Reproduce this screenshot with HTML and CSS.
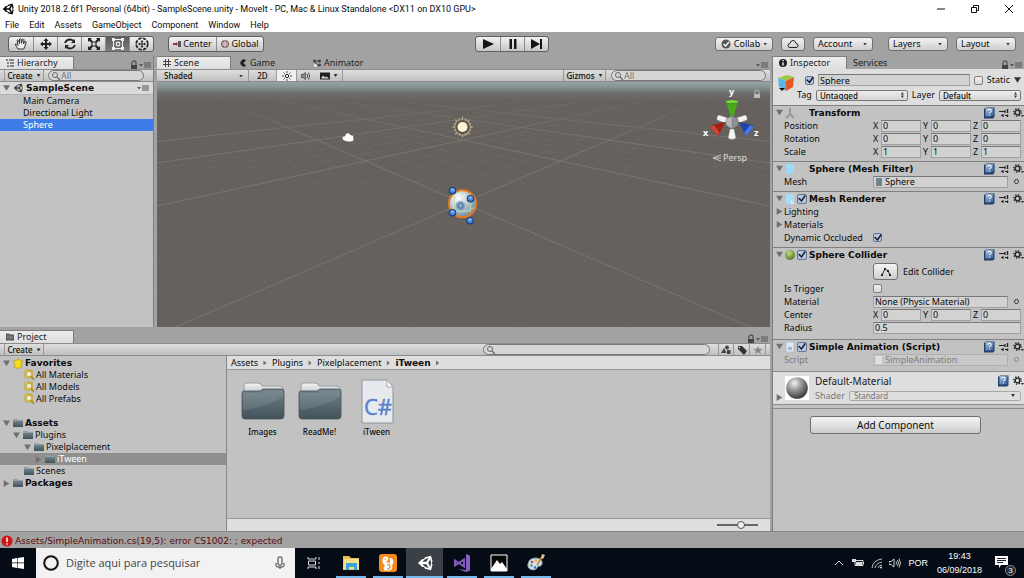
FILE: index.html
```html
<!DOCTYPE html>
<html lang="en">
<head>
<meta charset="utf-8">
<title>Unity 2018.2.6f1 Personal (64bit) - SampleScene.unity</title>
<link rel="stylesheet" href="styles.css">
</head>
<body>
<svg class="defs" aria-hidden="true">
  <defs>
    <linearGradient id="gFolder" x1="0" y1="0" x2="0" y2="1"><stop offset="0" stop-color="#71828a"/><stop offset="1" stop-color="#43525a"/></linearGradient>
    <linearGradient id="gTab" x1="0" y1="0" x2="0" y2="1"><stop offset="0" stop-color="#f4f4f4"/><stop offset="1" stop-color="#b4b8ba"/></linearGradient>
    <radialGradient id="gBall" cx=".38" cy=".28" r=".75"><stop offset="0" stop-color="#f5f5f5"/><stop offset=".35" stop-color="#a8a8a8"/><stop offset="1" stop-color="#333"/></radialGradient>
    <radialGradient id="gGreen" cx=".4" cy=".3" r=".8"><stop offset="0" stop-color="#c5dc85"/><stop offset="1" stop-color="#456d14"/></radialGradient>
    <linearGradient id="gHelp" x1="0" y1="0" x2="1" y2="1"><stop offset="0" stop-color="#a9c4e4"/><stop offset="1" stop-color="#31588f"/></linearGradient>
  </defs>
  <symbol id="unity" viewBox="0 0 24 24"><path fill-rule="evenodd" d="M21 1 12 3.500 10.700 5.900 8 5.900 1.500 12 8 18.100 10.700 18.100 12 20.500 21 23 23.300 14.500 22 12 23.300 9.500ZM11 7.200 17.500 4 14.200 10.300 8 10.300ZM8 13.700 14.200 13.700 17.500 20 11 16.800ZM16.800 12 20 6 21 12 20 18Z"/></symbol>
  <symbol id="lock" viewBox="0 0 8 10"><path d="M2 5V3a2 2 0 0 1 4 0v2" fill="none" stroke="#555" stroke-width="1.300"/><rect x="1" y="5" width="6" height="4" fill="#444"/></symbol>
  <symbol id="menu" viewBox="0 0 12 8"><path d="M0 3h4L2 5.500zM5 1.500h7v1H5zm0 2h7v1H5zm0 2h7v1H5z" fill="#555"/></symbol>
  <symbol id="lens" viewBox="0 0 10 10"><circle cx="4" cy="4" r="2.500" fill="none" stroke="#666"/><path d="M6 6l3 3" stroke="#666" stroke-width="1.300"/></symbol>
  <symbol id="folder" viewBox="0 0 12 10"><path d="M1 1h4l1 1h5v7H1z" fill="#8fa0a8"/><rect x="1" y="3" width="10" height="6" fill="url(#gFolder)"/></symbol>
  <symbol id="bigfolder" viewBox="0 0 44 38"><path d="M3 14V4q0-3 3-3h11q3 0 4 3h18q3 0 3 3v7z" fill="url(#gTab)" stroke="#8b9194" stroke-width=".8"/><path d="M1 11q0-2 2-2h16l3-2h18q3 0 3 2v25q0 3-3 3H4q-3 0-3-3z" fill="url(#gFolder)" stroke="#48545a" stroke-width=".8"/><path d="M2 11h18l3-2h19v5Q30 24 2 28z" fill="#fff" opacity=".09"/></symbol>
  <symbol id="help" viewBox="0 0 12 12"><path d="M1 2l2-1.500h8.500V10L10 11.500H1z" fill="#213f68"/><rect x="2.500" y="1" width="8" height="8.500" fill="url(#gHelp)"/><path d="M5 4q0-1.700 1.600-1.700T8.200 4q0 .8-1 1.200-.6.300-.6 1M6.600 7.500v1" fill="none" stroke="#fff" stroke-width="1.100"/></symbol>
  <symbol id="preset" viewBox="0 0 10 10"><path d="M0 3.500h6M6 2v3M2 7.500h2M4 6v3M6 7.500h3" stroke="#222" stroke-width="1.200" fill="none"/><path d="M8.500 1v4M8.500 6.500V9" stroke="#222" stroke-width="1.400"/></symbol>
  <symbol id="gear" viewBox="0 0 11 10"><circle cx="4.500" cy="4.500" r="2.300" fill="none" stroke="#222" stroke-width="1.300"/><circle cx="4.500" cy="4.500" r="3.600" fill="none" stroke="#222" stroke-width="1.400" stroke-dasharray="1.400 1.430"/><path d="M8 7h3L9.500 9z" fill="#222"/></symbol>
  <symbol id="query" viewBox="0 0 12 12"><path d="M2 1h7v8H2z" fill="#eee7b5" stroke="#bea63a"/><circle cx="6" cy="5" r="3" fill="#eeeacb" stroke="#c7a938" stroke-width="1.300"/><path d="M8 7l3 4" stroke="#ad8b20" stroke-width="1.600"/></symbol>
</svg>

<div class="app">
  <header class="titlebar">
    <svg class="i12"><use href="#unity"/></svg>
    <h1 class="title">Unity 2018.2.6f1 Personal (64bit) - SampleScene.unity - MoveIt - PC, Mac &amp; Linux Standalone &lt;DX11 on DX10 GPU&gt;</h1>
    <button class="win" aria-label="Minimize"><svg class="i12" viewBox="0 0 12 12"><path d="M2 6h8" stroke="#111"/></svg></button>
    <button class="win" aria-label="Restore"><svg class="i12" viewBox="0 0 12 12"><path d="M2.500 4.500h5v5h-5zM4.500 4V2.500h5v5H8" fill="none" stroke="#111"/></svg></button>
    <button class="win" aria-label="Close"><svg class="i12" viewBox="0 0 12 12"><path d="M2 2l8 8M10 2l-8 8" stroke="#111"/></svg></button>
  </header>
  <nav class="menubar">
    <button>File</button><button>Edit</button><button>Assets</button><button>GameObject</button><button>Component</button><button>Window</button><button>Help</button>
  </nav>

  <div class="toolbar">
    <div class="toolside">
      <div class="segment">
        <button class="seg" aria-label="Hand"><svg class="i14" viewBox="0 0 14 14"><path d="M4 12 1.500 8q-.5-1.500 1-1L4 8.500 3 3.500q.8-1.200 1.500 0l1 3L5.500 2q1-1.200 1.600 0l.4 4.300L8.500 2.500q1-1 1.500.2L9.500 7l1.300-2.500q1.200-.6 1.400.5L11 9l-1.200 3z" fill="#eee" stroke="#222" stroke-width=".9"/></svg></button>
        <button class="seg" aria-label="Move"><svg class="i14" viewBox="0 0 14 14"><path d="M7 1l2.500 3H8v2h2V4.500L13 7l-3 2.500V8H8v2h1.500L7 13 4.500 10H6V8H4v1.500L1 7l3-2.500V6h2V4H4.500z" fill="#222"/></svg></button>
        <button class="seg" aria-label="Rotate"><svg class="i14" viewBox="0 0 14 14"><path d="M2 6q1.500-3.500 5-3.500 2 0 3.500 1.500M12 8q-1.500 3.500-5 3.500-2 0-3.500-1.500" fill="none" stroke="#222" stroke-width="1.800"/><path d="M12 2v4H8zM2 12V8h4z" fill="#222"/></svg></button>
        <button class="seg" aria-label="Scale"><svg class="i14" viewBox="0 0 14 14"><path d="M5 5h4v4H5z" fill="none" stroke="#222" stroke-width="1.200"/><path d="M1 1h4L3.800 2.200l2 2-1.600 1.600-2-2L1 5zM13 1v4l-1.200-1.200-2 2-1.600-1.600 2-2L9 1zM1 13V9l1.200 1.200 2-2 1.600 1.600-2 2L5 13zM13 13H9l1.200-1.200-2-2 1.600-1.600 2 2L13 9z" fill="#222"/></svg></button>
        <button class="seg on" aria-label="Rect" aria-pressed="true"><svg class="i14" viewBox="0 0 14 14"><path d="M2.500 2.500h9v9h-9z" fill="none" stroke="#f4f4f4"/><circle cx="7" cy="7" r="1.800" fill="none" stroke="#f4f4f4" stroke-width="1.200"/><path d="M1 1h3v3H1zm9 0h3v3h-3zM1 10h3v3H1zm9 0h3v3h-3z" fill="#eee"/></svg></button>
        <button class="seg" aria-label="Transform"><svg class="i14" viewBox="0 0 14 14"><circle cx="7" cy="7" r="5.800" fill="none" stroke="#222" stroke-width="1.700" stroke-dasharray="3.400 1.150"/><path d="M7 3l1.500 2h-1v1.500H9v-1L11 7 9 8.500v-1H7.500V9h1L7 11 5.500 9h1V7.500H5v1L3 7l2-1.500v1h1.500V5h-1z" fill="#222"/></svg></button>
      </div>
      <div class="segment">
        <button class="seg word"><svg class="i8" viewBox="0 0 8 8"><path d="M0 3h3v2H0zm3-1l2 2-2 2z" fill="#934"/><path d="M5 1h3v6H5z" fill="#555"/></svg>Center</button>
        <button class="seg word"><svg class="i8" viewBox="0 0 8 8"><circle cx="4" cy="4" r="3.500" fill="#b08a8d" stroke="#644"/><path d="M1 3h6M4 0v8M1 5h6" stroke="#ddd" stroke-width=".7"/></svg>Global</button>
      </div>
    </div>
    <div class="segment">
      <button class="seg" aria-label="Play"><svg class="i14" viewBox="0 0 14 14"><path d="M2 2l11 5-11 5z" fill="#151515"/></svg></button>
      <button class="seg" aria-label="Pause"><svg class="i14" viewBox="0 0 14 14"><path d="M3.500 2h2.500v10H3.500zm4.500 0h2.500v10H8z" fill="#151515"/></svg></button>
      <button class="seg" aria-label="Step"><svg class="i14" viewBox="0 0 14 14"><path d="M1 2l9 5-9 5zM10 2h2v10h-2z" fill="#151515"/></svg></button>
    </div>
    <div class="toolside end">
      <button class="tbtn collab"><svg class="i10" viewBox="0 0 10 10"><circle cx="5" cy="5" r="4.500" fill="#555"/><path d="M2.500 5l2 2 3.500-4" fill="none" stroke="#fff" stroke-width="1.400"/></svg>Collab<i class="down"></i></button>
      <button class="tbtn cloud" aria-label="Services"><svg class="i12" viewBox="0 0 12 12"><path d="M3 9.500q-2 0-2-2t2-2q.3-3 3-3t3 3q2 0 2 2t-2 2z" fill="none" stroke="#222"/></svg></button>
      <span class="pick tpick"><select aria-label="Account"><option>Account</option></select></span>
      <span class="pick tpick set"><select aria-label="Layers"><option>Layers</option></select></span>
      <span class="pick tpick"><select aria-label="Layout"><option>Layout</option></select></span>
    </div>
  </div>

  <main class="workspace">
    <div class="left">
      <div class="upper">
        <section class="panel hierarchy">
          <div class="tabs">
            <button class="tab on"><svg class="i8" viewBox="0 0 8 8"><path d="M0 1h2m1 0h5M1 4h2m1 0h4M1 7h2m1 0h4" stroke="#222"/></svg>Hierarchy</button>
            <span class="tabtools"><svg class="lk"><use href="#lock"/></svg><svg class="mn"><use href="#menu"/></svg></span>
          </div>
          <div class="bar">
            <button class="barbtn create">Create<i class="down"></i></button>
            <label class="search"><svg class="i10"><use href="#lens"/></svg><input type="search" placeholder="All" aria-label="Search hierarchy"></label>
          </div>
          <div class="scenerow"><i class="tri open"></i><svg class="i10 grey"><use href="#unity"/></svg><b>SampleScene</b><svg class="mn"><use href="#menu"/></svg></div>
          <ul class="objects"><li>Main Camera</li><li>Directional Light</li><li class="sel">Sphere</li></ul>
        </section>

        <section class="panel scene">
          <div class="tabs">
            <button class="tab on"><svg class="i8" viewBox="0 0 8 8"><path d="M2.500 0v8M5.500 0v8M0 2.500h8M0 5.500h8" stroke="#444"/></svg>Scene</button>
            <button class="tab"><svg class="i8" viewBox="0 0 8 8"><path d="M7 1.200A3.500 3.500 0 1 0 7 6.800L4.500 4z" fill="#222"/></svg>Game</button>
            <button class="tab"><svg class="i8" viewBox="0 0 8 8"><path d="M2 2h4M2 2l2 4M2 6h4" stroke="#444"/><circle cx="1.500" cy="2" r="1.500" fill="#444"/><circle cx="6.500" cy="2" r="1.500" fill="#444"/><circle cx="6.500" cy="6" r="1.500" fill="#444"/><circle cx="2.500" cy="6.500" r="1.400" fill="#eee"/></svg>Animator</button>
            <span class="tabtools"><svg class="mn"><use href="#menu"/></svg></span>
          </div>
          <div class="bar">
            <span class="pick shade"><select aria-label="Shading mode"><option>Shaded</option></select></span>
            <button class="barbtn two">2D</button>
            <button class="barbtn lit" aria-label="Lighting" aria-pressed="true"><svg class="i10" viewBox="0 0 10 10"><circle cx="5" cy="5" r="1.700" fill="none" stroke="#222"/><path d="M5 0v2M5 8v2M0 5h2M8 5h2M1.500 1.500l1.300 1.300M7.200 7.200l1.300 1.300M8.500 1.500L7.200 2.800M1.500 8.500l1.300-1.300" stroke="#222" stroke-width=".8"/></svg></button>
            <button class="barbtn ic" aria-label="Audio"><svg class="i10" viewBox="0 0 10 10"><path d="M0 3.500h2l2.500-2v7L2 6.500H0z" fill="#888" stroke="#444" stroke-width=".7"/><path d="M6 3q1.300 2 0 4M7.500 1.500q2.300 3.500 0 7" fill="none" stroke="#444" stroke-width=".9"/></svg></button>
            <button class="barbtn fx" aria-label="Effects"><svg class="i10" viewBox="0 0 10 10"><path d="M0 1.500h10v7H0z" fill="#222"/><path d="M1 7.500l2-3 2 2 1.500-1L9 7.500z" fill="#ddd"/></svg><i class="down"></i></button>
            <button class="barbtn gizmos">Gizmos<i class="down"></i></button>
            <label class="search"><svg class="i10"><use href="#lens"/></svg><input type="search" placeholder="All" aria-label="Search scene"></label>
          </div>
          <div class="view">
            <svg class="grid" viewBox="0 0 613 245" preserveAspectRatio="xMidYMid slice">
              <defs>
                <linearGradient id="sky" x1="0" y1="0" x2="0" y2="1"><stop offset="0" stop-color="#93a5a6"/><stop offset=".02" stop-color="#879394"/><stop offset=".045" stop-color="#6e6e6d"/><stop offset=".08" stop-color="#67615d" stop-opacity=".7"/><stop offset=".25" stop-color="#67615d" stop-opacity="0"/></linearGradient>
                <radialGradient id="orb" cx=".35" cy=".3" r=".8"><stop offset="0" stop-color="#fff"/><stop offset=".4" stop-color="#c8d3d6"/><stop offset="1" stop-color="#5d7d9b"/></radialGradient>
                <radialGradient id="knob" cx=".5" cy=".3" r=".7"><stop offset="0" stop-color="#8cc2ff"/><stop offset="1" stop-color="#1a55b8"/></radialGradient>
              </defs>
              <rect width="613" height="245" fill="#67615d"/>
              <g stroke="#807a75" stroke-width=".6" opacity=".35">
                <path d="M14-5-218 245M14-5-102 245M14-5 130 245M14-5 246 245M14-5 362 245M14-5 478 245M14-5 710 245M14-5 826 245M14-5 942 245M14-5 1058 245M14-5 1290 245M14-5 1406 245M14-5 1522 245M14-5 1638 245M14-5 1960 245M14-5 2700 245M14-5 3600 245"/>
                <path d="M598-5 830 245M598-5 714 245M598-5 482 245M598-5 366 245M598-5 250 245M598-5 134 245M598-5-98 245M598-5-214 245M598-5-330 245M598-5-446 245M598-5-678 245M598-5-794 245M598-5-910 245M598-5-1026 245M598-5-1348 245M598-5-2088 245M598-5-2988 245"/>
              </g>
              <path d="M14-5 594 245M14-5 1174 245M14-5 1754 245M14-5 2334 245M598-5 18 245M598-5-562 245M598-5-1142 245M598-5-1722 245" stroke="#99928a" stroke-width=".8" opacity=".5"/>
              <rect width="613" height="245" fill="url(#sky)"/>
              <path d="M186 58q-2-4 2-4 1-4 4-3l2 2q3-1 3 3v3q-5 2-9 0z" fill="#fff" stroke="#444" stroke-width=".6"/>
              <g transform="translate(305.500 45)"><circle r="8" fill="#5b564b" stroke="#a8a28b" stroke-width="1.800"/><path d="M0-13 1.500-7h-3zM0 13 1.500 7h-3zM13 0 7 1.500v-3zM-13 0-7 1.500v-3zM9-9 6-4 4-6zM-9-9-6-4-4-6zM9 9 6 4 4 6zM-9 9-6 4-4 6z" fill="#b9b39b" stroke="#4c483f" stroke-width=".5"/><circle r="5" fill="#fff2d2"/></g>
              <g transform="translate(305.500 121.500)"><circle r="13.500" fill="url(#orb)" stroke="#e87a1d" stroke-width="2"/><path d="M-8-12V8H8V-6M-10 4Q0 10 12 4M-6-11Q0-14 7-6" fill="none" stroke="#b8dcb4" stroke-width=".8"/><circle cx="-2" cy="2" r="5" fill="#7898b8" opacity=".7"/><circle cx="-2" cy="2" r="2.500" fill="none" stroke="#446fa5"/><g fill="url(#knob)" stroke="#153d7d"><circle cx="-10" cy="-13" r="3.300"/><circle cx="8" cy="-5" r="3.300"/><circle cx="-10" cy="9" r="3.300"/><circle cx="7.500" cy="17" r="3.300"/></g></g>
            </svg>
            <div class="compass">
              <svg viewBox="0 0 64 84" width="64" height="84">
                <g stroke="#555" stroke-width=".3"><path d="M20 29l9 3-3 5-8-3q-1-4 2-5zM46 29l-9 3 3 5 8-3q1-4-2-5z" fill="#f3f3f3"/><path d="M27 16h12l-5 17h-2z" fill="#47a81a"/><path d="M27 15q6-2 12 0v2H27z" fill="#7be23c"/><path d="M27 33l6-3 6 3v6l-6 4-6-4z" fill="#b4b8b8"/><path d="M33 30l6 3v6l-6 4z" fill="#8f9393"/><path d="M12 39l14-3-6 13z" fill="#a61e12"/><path d="M11 41l4-2 6 8-2 3z" fill="#d84230"/><path d="M54 39l-14-3 6 13z" fill="#1c44ae"/><path d="M55 41l-4-2-6 8 2 3z" fill="#4478f0"/><path d="M31 43h4l2 9q-4 3-8 0z" fill="#f4f4f4"/></g>
                <text x="30" y="9" class="axis">y</text><text x="4" y="50" class="axis">x</text><text x="55" y="50" class="axis">z</text>
                <path d="M22 69l-8 3 8 3M22 72h-7" fill="none" stroke="#ddd" stroke-width=".8"/><text x="24" y="75" class="persp">Persp</text>
              </svg>
              <svg class="vlock" viewBox="0 0 8 10"><path d="M2 5V3a2 2 0 0 1 4 0v2" fill="none" stroke="#bbb"/><path d="M1 5h6v4H1z" fill="#bbb"/></svg>
            </div>
          </div>
        </section>
      </div>

      <section class="panel project">
        <div class="tabs">
          <button class="tab on"><svg class="i8" viewBox="0 0 8 8"><path d="M0 1h3l1 1h4v5H0z" fill="#777" stroke="#333" stroke-width=".8"/></svg>Project</button>
          <span class="tabtools"><svg class="lk"><use href="#lock"/></svg><svg class="mn"><use href="#menu"/></svg></span>
        </div>
        <div class="bar">
          <button class="barbtn create">Create<i class="down"></i></button>
          <label class="search wide"><svg class="i10"><use href="#lens"/></svg><input type="search" aria-label="Search assets"></label>
          <button class="barbtn pic" aria-label="Search by type"><svg class="i10" viewBox="0 0 10 10"><circle cx="6" cy="2.500" r="2" fill="#444"/><path d="M0 8l3-5 2.500 5zM6 5h3.500v4H6z" fill="#444"/></svg></button>
          <button class="barbtn pic" aria-label="Search by label"><svg class="i10" viewBox="0 0 10 10"><path d="M1 1h4l5 5-3 4-6-6z" fill="#333"/><circle cx="2.500" cy="2.500" r=".8" fill="#ddd"/></svg></button>
          <button class="barbtn pic" aria-label="Save search"><svg class="i10" viewBox="0 0 10 10"><path d="M5 1l1.200 2.800L9.500 4 7 6l.8 3L5 7.300 2.200 9 3 6 .5 4l3.300-.2z" fill="#888"/></svg></button>
        </div>
        <div class="browser">
          <ul class="tree">
            <li><i class="tri open"></i><svg class="i12" viewBox="0 0 12 12"><path d="M6 1l1.500 2.500 3.500.5-2 3 .5 4h-7L3 7 1 4l3.500-.5z" fill="#f8dc20" stroke="#b89a1c" stroke-width=".7"/></svg><b>Favorites</b></li>
            <li class="d1"><svg class="i12"><use href="#query"/></svg>All Materials</li>
            <li class="d1"><svg class="i12"><use href="#query"/></svg>All Models</li>
            <li class="d1"><svg class="i12"><use href="#query"/></svg>All Prefabs</li>
            <li class="group"><i class="tri open"></i><svg class="i12"><use href="#folder"/></svg><b>Assets</b></li>
            <li class="d1"><i class="tri open"></i><svg class="i12"><use href="#folder"/></svg>Plugins</li>
            <li class="d2"><i class="tri open"></i><svg class="i12"><use href="#folder"/></svg>Pixelplacement</li>
            <li class="d3 sel"><i class="tri"></i><svg class="i12"><use href="#folder"/></svg>iTween</li>
            <li class="d1"><svg class="i12"><use href="#folder"/></svg>Scenes</li>
            <li><i class="tri"></i><svg class="i12"><use href="#folder"/></svg><b>Packages</b></li>
          </ul>
          <div class="files">
            <nav class="crumbs" aria-label="Path"><a href="#">Assets</a><i class="tri small"></i><a href="#">Plugins</a><i class="tri small"></i><a href="#">Pixelplacement</a><i class="tri small"></i><b>iTween</b><i class="tri small"></i></nav>
            <div class="assets">
              <figure><svg class="thumb" viewBox="0 0 44 46"><use href="#bigfolder" y="3" width="44" height="38"/></svg><figcaption>Images</figcaption></figure>
              <figure><svg class="thumb" viewBox="0 0 44 46"><use href="#bigfolder" y="3" width="44" height="38"/></svg><figcaption>ReadMe!</figcaption></figure>
              <figure><svg class="thumb" viewBox="0 0 44 46"><path d="M7 1h25l6 7v36H7z" fill="#e6eaee" stroke="#909498"/><path d="M32 1v7h6z" fill="#fff" stroke="#a5a9ad"/><text x="9" y="36" class="cs">C#</text></svg><figcaption>iTween</figcaption></figure>
            </div>
            <div class="zoombar"><input type="range" min="0" max="100" value="60" aria-label="Thumbnail size"></div>
          </div>
        </div>
      </section>
    </div>

    <section class="panel inspector">
      <div class="tabs">
        <button class="tab on"><svg class="i8" viewBox="0 0 8 8"><circle cx="4" cy="4" r="4" fill="#222"/><path d="M4 1v1.300M4 3.500v3" stroke="#fff" stroke-width="1.400"/></svg>Inspector</button>
        <button class="tab plain">Services</button>
        <span class="tabtools"><svg class="lk"><use href="#lock"/></svg><svg class="mn"><use href="#menu"/></svg></span>
      </div>
      <div class="objhead">
        <svg class="cube" viewBox="0 0 18 18"><path d="M1 4l9-3 7 2-8 4z" fill="#9cc848"/><path d="M1 4l8 3v10l-7-4z" fill="#5ab4e8"/><path d="M9 7l8-4-1 10-7 4z" fill="#e45a24"/><path d="M2 14h6l-3 3z" fill="#111"/></svg>
        <div class="objrows">
          <div class="line"><input class="ck" type="checkbox" checked aria-label="Active"><input class="field grow" value="Sphere" aria-label="Name"><label class="static"><input class="ck" type="checkbox">Static</label><i class="tri open dark"></i></div>
          <div class="line second"><label for="tag">Tag</label><span class="pick ud"><select id="tag"><option>Untagged</option></select></span><label for="layer">Layer</label><span class="pick ud narrow"><select id="layer"><option>Default</option></select></span></div>
        </div>
      </div>

      <section class="comp">
        <h2 class="head"><i class="tri open"></i><svg class="i12" viewBox="0 0 12 12"><path d="M6 1v6M6 7l-4 4M6 7l4 4" stroke="#999" stroke-width="2" fill="none"/></svg><span class="nock"></span><span class="name">Transform</span><svg class="i12"><use href="#help"/></svg><svg class="i10"><use href="#preset"/></svg><svg class="gr"><use href="#gear"/></svg></h2>
        <div class="row"><span>Position</span><div class="vec"><label>X<input class="field" value="0"></label><label>Y<input class="field" value="0"></label><label>Z<input class="field" value="0"></label></div></div>
        <div class="row"><span>Rotation</span><div class="vec"><label>X<input class="field" value="0"></label><label>Y<input class="field" value="0"></label><label>Z<input class="field" value="0"></label></div></div>
        <div class="row"><span>Scale</span><div class="vec"><label>X<input class="field" value="1"></label><label>Y<input class="field" value="1"></label><label>Z<input class="field" value="1"></label></div></div>
      </section>

      <section class="comp">
        <h2 class="head"><i class="tri open"></i><svg class="i12" viewBox="0 0 12 12"><rect x="2" y="1" width="8" height="10" fill="#9edaf5"/></svg><span class="nock"></span><span class="name">Sphere (Mesh Filter)</span><svg class="i12"><use href="#help"/></svg><svg class="i10"><use href="#preset"/></svg><svg class="gr"><use href="#gear"/></svg></h2>
        <div class="row"><label for="mesh">Mesh</label><div class="obj"><span class="field slot"><svg class="i8" viewBox="0 0 8 8"><path d="M1 0h6v8H1z" fill="#71858c"/></svg><input id="mesh" value="Sphere"></span><button class="dot" aria-label="Pick mesh"></button></div></div>
      </section>

      <section class="comp">
        <h2 class="head"><i class="tri open"></i><svg class="i12" viewBox="0 0 12 12"><rect x="2" y="1" width="8" height="10" fill="#a9dcf4"/><path d="M7 7l3 4H7z" fill="#eef"/></svg><input class="ck" type="checkbox" checked aria-label="Enable Mesh Renderer"><span class="name">Mesh Renderer</span><svg class="i12"><use href="#help"/></svg><svg class="i10"><use href="#preset"/></svg><svg class="gr"><use href="#gear"/></svg></h2>
        <div class="row fold"><i class="tri"></i><span>Lighting</span></div>
        <div class="row fold"><i class="tri"></i><span>Materials</span></div>
        <div class="row"><label for="occ">Dynamic Occluded</label><input id="occ" class="ck" type="checkbox" checked></div>
      </section>

      <section class="comp tall">
        <h2 class="head"><i class="tri open"></i><svg class="i12" viewBox="0 0 12 12"><circle cx="6" cy="6" r="5" fill="url(#gGreen)"/></svg><input class="ck" type="checkbox" checked aria-label="Enable Sphere Collider"><span class="name">Sphere Collider</span><svg class="i12"><use href="#help"/></svg><svg class="i10"><use href="#preset"/></svg><svg class="gr"><use href="#gear"/></svg></h2>
        <div class="row edit"><span></span><div class="editcell"><button id="edit" class="tbtn editbtn" aria-label="Edit Collider"><svg class="i12" viewBox="0 0 12 12"><path d="M2 9l3-6 3 2 2 4" fill="none" stroke="#222"/><path d="M1 8h2v2H1zm3-6h2v2H4zm3 2h2v2H7zm2 4h2v2H9z" fill="#222"/></svg></button><label for="edit">Edit Collider</label></div></div>
        <div class="row"><label for="trig">Is Trigger</label><input id="trig" class="ck" type="checkbox"></div>
        <div class="row"><label for="mat">Material</label><div class="obj"><input id="mat" class="field" value="None (Physic Material)"><button class="dot" aria-label="Pick material"></button></div></div>
        <div class="row"><span>Center</span><div class="vec"><label>X<input class="field" value="0"></label><label>Y<input class="field" value="0"></label><label>Z<input class="field" value="0"></label></div></div>
        <div class="row"><label for="rad">Radius</label><input id="rad" class="field" value="0.5"></div>
      </section>

      <section class="comp tall">
        <h2 class="head"><i class="tri open"></i><svg class="i12" viewBox="0 0 12 12"><rect x="2" y="1" width="8" height="10" fill="#dde6ec" stroke="#aab4bb" stroke-width=".6"/><path d="M4 6h4v3H4z" fill="#9db8d0"/></svg><input class="ck" type="checkbox" checked aria-label="Enable Simple Animation"><span class="name">Simple Animation (Script)</span><svg class="i12"><use href="#help"/></svg><svg class="i10"><use href="#preset"/></svg><svg class="gr"><use href="#gear"/></svg></h2>
        <div class="row off"><label for="scr">Script</label><div class="obj"><span class="field slot"><svg class="i8" viewBox="0 0 8 8"><path d="M1 0h6v8H1z" fill="#dce0e3"/></svg><input id="scr" value="SimpleAnimation" disabled></span><button class="dot" aria-label="Pick script" disabled></button></div></div>
      </section>

      <section class="material">
        <i class="tri"></i>
        <svg class="ball" viewBox="0 0 24 24"><rect width="24" height="24" fill="#fff"/><circle cx="12" cy="12" r="10.800" fill="url(#gBall)"/></svg>
        <div class="matbody">
          <div class="matname"><span>Default-Material</span><svg class="i12"><use href="#help"/></svg><svg class="gr"><use href="#gear"/></svg></div>
          <div class="line"><label for="shader">Shader</label><span class="pick faint"><select id="shader" disabled><option>Standard</option></select></span></div>
        </div>
      </section>
      <div class="addwrap"><button class="tbtn add">Add Component</button></div>
    </section>
  </main>

  <footer class="status"><svg class="i12" viewBox="0 0 12 12"><circle cx="6" cy="6" r="5.600" fill="#cf1515"/><path d="M6 2.500v4.500M6 8.200v1.500" stroke="#fff" stroke-width="1.500"/></svg><span>Assets/SimpleAnimation.cs(19,5): error CS1002: ; expected</span></footer>

  <div class="taskbar">
    <button class="start" aria-label="Start"><svg class="i14" viewBox="0 0 14 14"><path d="M1 3l5-1v4.600H1zM6.600 1.900 13 1v5.600H6.600zM1 7.300h5V12l-5-1zM6.600 7.300H13V13l-6.400-.9z" fill="#fff"/></svg></button>
    <label class="cortana"><svg class="i18" viewBox="0 0 18 18"><circle cx="9" cy="9" r="6.800" fill="none" stroke="#111" stroke-width="2"/></svg><input type="text" placeholder="Digite aqui para pesquisar" aria-label="Pesquisar"><svg class="i14" viewBox="0 0 14 14"><rect x="5" y="1" width="4" height="8" rx="1" fill="none" stroke="#333"/><path d="M3 7v2.500q0 1.500 2 1.500h4q2 0 2-1.500V7M7 11v2" fill="none" stroke="#333"/></svg></label>
    <button class="task" aria-label="Task view"><svg class="i14" viewBox="0 0 14 14"><path d="M1 1v2h8V1M1 13v-2h8v2M1.500 5h7v4h-7zM12 1v3M12 6v2M12 10v3" fill="none" stroke="#ddd"/></svg></button>
    <button class="task run" aria-label="Explorer"><svg class="i18" viewBox="0 0 18 18"><path d="M1 2h6l2 2h8v12H1z" fill="#e8bf50"/><path d="M2 5h15v10H1z" fill="#f8df8c"/><path d="M4 9h11v7h-3v-3H7v3H4z" fill="#39a5dc"/></svg></button>
    <button class="task run" aria-label="Browser"><svg class="i18" viewBox="0 0 18 18"><rect width="18" height="18" rx="3" fill="#f38a1c"/><path d="M3.500 5.500Q4 2 7.500 2.500q2.500 1 1.500 3.500Q8 8 6.500 8q2.500 0 4 1.500 1-2.500 0-5.500 4 0 4 4-.5 2.500-1.500 3.500 1.500 4-3 5H5.500Q3.500 14 6 11.500 3 9 3.500 5.500z" fill="#fff"/><path d="M8 11q3-1 3 1.500T8 15" stroke="#f38a1c" stroke-width="1.200" fill="none"/><circle cx="6.300" cy="5" r=".8" fill="#f38a1c"/></svg></button>
    <button class="task run cur" aria-label="Unity"><svg class="i16 white"><use href="#unity"/></svg></button>
    <button class="task run" aria-label="Visual Studio"><svg class="i18" viewBox="0 0 18 18"><path d="M13 0l4 1.500v15L13 18l-8-3 8 1z" fill="#865fc5"/><path d="M2 6.500l9 6V5.500l-9 6z" fill="none" stroke="#865fc5" stroke-width="1.900"/></svg></button>
    <button class="task run" aria-label="Photos"><svg class="i18" viewBox="0 0 18 18"><path d="M1 1h16v16H1z" fill="#080808" stroke="#fff"/><path d="M1 15l6-9 3 4 2-2 5 7v2H1z" fill="#fff"/></svg></button>
    <button class="task run" aria-label="Paint"><svg class="i18" viewBox="0 0 18 18"><path d="M1 10q1-6 8-6 7 1 6 6-1 3-4 2-1 4-5 4-6-1-5-6z" fill="#cde3ef" stroke="#8ba7b8"/><circle cx="5" cy="8" r="1.300" fill="#c43"/><circle cx="9" cy="6.500" r="1.300" fill="#e8b020"/><circle cx="4.500" cy="11.500" r="1.300" fill="#58a735"/><circle cx="8" cy="13.500" r="1.200" fill="#36c"/><path d="M10 11l5-8" stroke="#cf8735" stroke-width="1.800"/><path d="M14 4l1-4 3 1-2 4z" fill="#e6c58b"/></svg></button>
    <div class="tray">
      <svg class="i12" viewBox="0 0 12 12"><path d="M2 8l4-4 4 4" fill="none" stroke="#ddd"/></svg>
      <svg class="i14" viewBox="0 0 14 14"><path d="M4 4.500h8v5H4zM12.500 6v2" fill="none" stroke="#ddd"/><path d="M5 6h6v3H5zM1 3h4v3H1z" fill="#ddd"/></svg>
      <svg class="i12" viewBox="0 0 12 12"><path d="M1 11Q2 3 11 2M4 11q1-5 7-6M7 11q1-3 4-3" fill="none" stroke="#bbb"/><circle cx="10" cy="10.500" r="1" fill="#ddd"/></svg>
      <svg class="i12" viewBox="0 0 12 12"><path d="M0 4.500h2l3-2.500v8L2 7.500H0zM7 4.500q1 1.500 0 3M8.500 3q2 3 0 6M10 1.500q3 4.500 0 9" fill="none" stroke="#ddd" stroke-width=".9"/></svg>
      <span class="lang">POR</span>
      <div class="clock"><time>19:43</time><time>06/09/2018</time></div>
      <button class="notes" aria-label="3 notifications"><svg class="i18" viewBox="0 0 18 18"><path d="M1 2h13v9H7l-2 3v-3H1z" fill="#fff"/><path d="M3 4.500h9M3 6.500h9M3 8.500h6" stroke="#223"/></svg><span class="badge">3</span></button>
    </div>
  </div>
</div>
</body>
</html>
```
FILE: styles.css
```css
* { box-sizing: border-box; }
body { margin: 0; font: 9px/12px "Noto Sans", "DejaVu Sans", sans-serif; color: #0c0c0c; background: #a2a2a2; }
button, input, select { font: inherit; color: inherit; margin: 0; padding: 0; border: 0; border-radius: 0; background: none; outline: 0; min-width: 0; }
ul, h1, h2, figure { margin: 0; padding: 0; list-style: none; font-size: inherit; }
svg { flex: none; display: block; }
a { color: inherit; text-decoration: none; }
b, .name { font-family: "DejaVu Sans", sans-serif; font-weight: 700; }
input::placeholder { color: #777; opacity: 1; }
input[type="search"] { appearance: none; }
.defs { position: absolute; width: 0; height: 0; }
.i8 { width: 8px; height: 8px; }
.i10 { width: 10px; height: 10px; }
.i12 { width: 12px; height: 12px; }
.i14 { width: 14px; height: 14px; }
.i16 { width: 16px; height: 16px; }
.i18 { width: 18px; height: 18px; }
.lk { width: 8px; height: 10px; }
.mn { width: 12px; height: 8px; }
.gr { width: 11px; height: 10px; }
.grey { fill: #444; }
.white { fill: #fff; }

.app { display: flex; flex-direction: column; min-height: 100vh; }

/* window frame */
.titlebar { display: flex; align-items: center; height: 17px; padding-left: 2px; gap: 4px; background: #fff; }
.title { flex: 1; font: 9px/12px Roboto, sans-serif; white-space: nowrap; overflow: hidden; }
.win { width: 30px; display: grid; place-items: center; }
.menubar { display: flex; height: 15px; padding-left: 5px; gap: 10px; background: #fff; font-family: Roboto, sans-serif; }
.menubar button { line-height: 14px; }

/* main toolbar */
.toolbar { display: grid; grid-template-columns: 1fr auto 1fr; align-items: center; height: 24px; padding: 0 8px; background: #a2a2a2; }
.toolside { display: flex; gap: 14px; }
.toolside.end { justify-content: flex-end; gap: 8px; }
.segment { display: flex; border: 1px solid #606060; border-radius: 3px; overflow: hidden; background: linear-gradient(#f2f2f2, #c6c6c6); }
.seg { width: 24px; height: 14px; display: flex; align-items: center; justify-content: center; gap: 2px; }
.seg + .seg { border-left: 1px solid #8c8c8c; }
.seg.on { background: linear-gradient(#5c5c5c, #7c7c7c); }
.seg.word { width: 47px; }
.tbtn { display: flex; align-items: center; justify-content: center; gap: 3px; height: 14px; border: 1px solid #707070; border-radius: 3px; background: linear-gradient(#f4f4f4, #cdcdcd); }
.collab { width: 58px; }
.cloud { width: 24px; }
.down { flex: none; width: 4px; height: 3px; background: #333; clip-path: polygon(0 0, 100% 0, 50% 100%); }

.pick { display: grid; align-items: center; }
.pick select, .pick::after { grid-area: 1 / 1; }
.pick select { appearance: none; width: 100%; height: 100%; }
.pick::after { content: ""; width: 4px; height: 3px; margin-right: 5px; justify-self: end; background: #333; clip-path: polygon(0 0, 100% 0, 50% 100%); pointer-events: none; }
.tpick { width: 60px; height: 14px; border: 1px solid #707070; border-radius: 3px; background: linear-gradient(#f4f4f4, #cdcdcd); }
.tpick select { padding-left: 4px; }
.tpick.set { margin-left: 7px; }

/* dock */
.workspace { flex: 1; display: flex; gap: 2px; }
.left { flex: 1; min-width: 0; display: flex; flex-direction: column; gap: 3px; }
.upper { flex: 272 1 0; display: flex; gap: 3px; }
.project { flex: 201 1 0; }
.panel { display: flex; flex-direction: column; min-width: 0; }
.tabs { display: flex; height: 13px; align-items: stretch; }
.tab { display: flex; align-items: center; gap: 3px; min-width: 74px; padding-left: 6px; color: #222; }
.tab.on { background: linear-gradient(#ececec, #dedede); border: 1px solid #7d7d7d; border-width: 1px 1px 0 0; }
.tab:not(.on) { padding-left: 8px; }
.tab.plain { padding-left: 6px; }
.tabtools { display: flex; align-items: center; gap: 1px; margin-left: auto; padding: 4px 2px 0 0; }
.bar { display: flex; align-items: stretch; height: 13px; border: 1px solid #8b8b8b; border-width: 1px 0; background: linear-gradient(#dedede, #c0c0c0); }
.barbtn { flex: none; display: flex; align-items: center; justify-content: center; gap: 4px; font-size: 8px; font-weight: 500; line-height: 11px; border-right: 1px solid #999; }
.create { width: 40px; margin-left: 4px; border-left: 1px solid #999; }
.search { display: flex; align-items: center; min-width: 0; height: 11px; border: 1px solid #777; border-radius: 6px; background: #d6d6d6; padding-left: 2px; }
.search input { flex: 1; width: 100%; height: 9px; line-height: 9px; }

.hierarchy { width: 154px; background: #c2c2c2; border-right: 1px solid #7e7e7e; }
.hierarchy .tabs, .scene .tabs, .project .tabs, .inspector .tabs { background: #a2a2a2; }
.hierarchy .search { flex: 1; margin: 0 9px 0 4px; }
.scenerow { display: flex; align-items: center; gap: 3px; height: 13px; padding: 0 4px 0 3px; background: #dadada; border-bottom: 1px solid #b0b0b0; }
.scenerow .mn { margin-left: auto; }
.tri { flex: none; width: 7px; height: 7px; background: #707070; clip-path: polygon(10% 0, 90% 50%, 10% 100%); }
.tri.open { clip-path: polygon(0 10%, 100% 10%, 50% 90%); }
.tri.dark { background: #333; }
.tri.small { width: 4px; height: 5px; }
.objects li { padding-left: 23px; height: 12px; }
.objects .sel { background: #3e7de7; color: #fff; }

.scene { flex: 1; }
.shade { flex: none; width: 92px; font-size: 8px; font-weight: 500; border-right: 1px solid #999; }
.shade select { padding-left: 7px; }
.two { width: 28px; }
.lit { width: 20px; background: #f0f0f0; }
.ic { width: 18px; border: 0; }
.fx { width: 28px; }
.gizmos { width: 43px; margin-left: auto; border-left: 1px solid #999; }
.scene .search { flex: 0 1 155px; margin: 0 4px 0 5px; }
.view { position: relative; flex: 1; overflow: hidden; background: #67615d; }
.grid { position: absolute; inset: 0; width: 100%; height: 100%; }
.compass { position: absolute; top: 4px; right: 7px; }
.vlock { position: absolute; right: 2px; top: 3px; width: 8px; height: 10px; }
.axis { font-size: 9px; font-weight: 700; fill: #fff; }
.persp { font-size: 9px; fill: #ddd; }

/* project browser */
.project .search { flex: 0 1 227px; margin: 0 8px 0 auto; }
.pic { width: 16px; }
.bar .search + .pic { border-left: 1px solid #999; }
.bar .pic:last-child { margin-right: 4px; }
.browser { flex: 1; display: flex; background: #c2c2c2; }
.tree { width: 227px; padding-top: 1px; border-right: 1px solid #888; }
.tree li { display: flex; align-items: center; gap: 1px; height: 12px; padding-left: 3px; }
.tree .tri { margin-right: 1px; }
.tree li.group { margin-top: 12px; }
.tree li.d1 { padding-left: 13px; }
.tree li.d1 > svg:first-child { margin-left: 10px; }
.tree li.d2 { padding-left: 24px; }
.tree li.d3 { padding-left: 35px; }
.tree li.sel { background: #8f8f8f; color: #fff; }
.files { flex: 1; display: flex; flex-direction: column; min-width: 0; }
.crumbs { display: flex; align-items: center; gap: 5px; height: 14px; padding-left: 4px; background: #dedede; border-bottom: 1px solid #999; }
.assets { flex: 1; display: flex; flex-wrap: wrap; align-content: flex-start; padding: 9px 7px; }
.assets figure { width: 57px; display: flex; flex-direction: column; align-items: center; gap: 1px; font-size: 8px; font-weight: 500; }
.thumb { width: 44px; height: 46px; }
.cs { font: 22px "Open Sans", sans-serif; fill: #5b82c8; stroke: #5b82c8; stroke-width: .5px; }
.zoombar { display: flex; align-items: center; justify-content: flex-end; height: 13px; padding-right: 12px; background: #dedede; border-top: 1px solid #999; }
.zoombar input { appearance: none; width: 41px; height: 8px; background: linear-gradient(#666, #666) center / 100% 2px no-repeat; }
.zoombar input::-webkit-slider-thumb { appearance: none; width: 8px; height: 8px; border: 1px solid #555; border-radius: 50%; background: #f0f0f0; }

/* inspector */
.inspector { flex: 0 0 252px; background: #c2c2c2; border-left: 1px solid #7e7e7e; }
.objhead { display: flex; align-items: flex-start; gap: 8px; height: 36px; padding: 5px 3px 0 4px; background: #dedede; }
.cube { width: 18px; height: 18px; }
.objrows { flex: 1; display: flex; flex-direction: column; gap: 3px; padding-left: 2px; min-width: 0; }
.line { display: flex; align-items: center; gap: 4px; height: 12px; }
.line.second { margin-left: -8px; }
.static { display: flex; align-items: center; gap: 4px; }
.grow { flex: 1; }
.field { width: 100%; height: 12px; padding: 0 1px; border: 1px solid #a0a0a0; border-top-color: #777; background: #d2d2d2; line-height: 10px; }
.ck { appearance: none; flex: none; display: grid; place-items: center; width: 9px; height: 9px; border: 1px solid #808080; border-radius: 2px; background: linear-gradient(#f0f0f0, #d8d8d8); }
.ck:checked { background: #b4c6de; border-color: #64748c; }
.ck:checked::after { content: ""; width: 8px; height: 7px; background: #101a33; clip-path: polygon(0 50%, 18% 38%, 40% 68%, 85% 0, 100% 10%, 45% 100%); }
.ud { flex: 9; height: 11px; border: 1px solid #777; border-radius: 2px; background: linear-gradient(#ededed, #d6d6d6); font-size: 8px; font-weight: 500; line-height: 9px; }
.ud.narrow { flex: 8; }
.ud select { padding-left: 3px; }
.ud::after { width: 3px; height: 6px; margin-right: 3px; clip-path: polygon(50% 0, 100% 40%, 0 40%, 0 60%, 100% 60%, 50% 100%, 0 60%, 0 40%); }
.comp { border-top: 1px solid #808080; padding: 0 3px 3px 3px; }
.comp.tall { padding-bottom: 5px; }
.head { display: flex; align-items: center; gap: 1px; height: 13px; margin-right: -3px; }
.head .ck { width: 10px; height: 10px; }
.nock { width: 10px; }
.name { flex: 1; padding-left: 1px; }
.head .i10, .head .gr { margin-left: 3px; }
.row { display: grid; grid-template-columns: 89px minmax(0, 1fr); align-items: center; min-height: 13px; padding-left: 8px; }
.row.edit { min-height: 21px; }
.row.fold { display: flex; padding-left: 0; gap: 1px; }
.vec { display: grid; grid-template-columns: 1fr 1fr 1fr; gap: 2px; }
.vec label { display: grid; grid-template-columns: 8px minmax(0, 1fr); align-items: center; }
.obj { display: flex; align-items: center; gap: 6px; padding-right: 2px; }
.obj .field { flex: 1; min-width: 0; }
.slot { display: flex; align-items: center; gap: 2px; }
.slot input { flex: 1; line-height: 10px; height: 10px; }
.dot { flex: none; width: 5px; height: 5px; border: 1px solid #333; border-radius: 50%; }
.off, .off .dot { color: #7c7c7c; border-color: #888; }
.off .field { background: #c8c8c8; border-color: #b0b0b0; }
.editcell { display: flex; align-items: center; gap: 5px; }
.editbtn { width: 25px; height: 17px; }
.material { display: flex; align-items: center; gap: 2px; height: 34px; padding: 0 3px 0 3px; background: #dedede; border: 1px solid #8c8c8c; border-width: 1px 0; }
.material .tri { align-self: flex-end; margin-bottom: 3px; }
.ball { width: 24px; height: 24px; }
.matbody { flex: 1; display: flex; flex-direction: column; gap: 2px; padding-left: 4px; color: #777; }
.matname { display: flex; align-items: center; gap: 4px; margin-right: -3px; font-size: 10px; line-height: 13px; color: #222; }
.matname span { flex: 1; }
.faint { flex: 1; height: 10px; border: 1px solid #aaa; border-radius: 2px; font-size: 8px; line-height: 8px; }
.faint select { padding-left: 4px; opacity: 1; }
.addwrap { flex: 1; margin-top: 3px; padding: 7px 6px 0 0; border-top: 1px solid #8c8c8c; display: flex; align-items: flex-start; justify-content: center; }
.add { width: 70%; height: 18px; font-size: 10px; }

/* status and taskbar */
.status { display: flex; align-items: center; gap: 2px; height: 17px; padding: 1px 1px 0; border-top: 1px solid #858585; background: #a2a2a2; color: #5c0a0a; font-family: "DejaVu Sans", sans-serif; }
.taskbar { display: flex; height: 30px; background: #050c16; color: #fff; }
.start { width: 36px; display: grid; place-items: center; }
.cortana { display: flex; align-items: center; flex: 0 0 259px; padding: 0 8px 0 6px; gap: 6px; background: #f2f2f2; }
.cortana input { flex: 1; font: 11px/16px "Open Sans", sans-serif; color: #333; }
.cortana input::placeholder { color: #444; }
.task { width: 37px; display: grid; place-items: center; }
.run { background: linear-gradient(#76b9ed, #76b9ed) bottom / 30px 2px no-repeat; }
.cur { background: linear-gradient(#76b9ed, #76b9ed) bottom / 100% 2px no-repeat #3b4047; }
.tray { display: flex; align-items: center; gap: 6px; margin-left: auto; padding-right: 12px; font: 9px/14px "Liberation Sans", sans-serif; }
.lang { margin-left: 1px; }
.clock { display: flex; flex-direction: column; align-items: center; margin: 0 6px 0 3px; }
.notes { position: relative; }
.badge { position: absolute; right: -4px; bottom: -4px; width: 11px; height: 11px; border: 1px solid #888; border-radius: 50%; background: #222a33; color: #fff; font-size: 8px; line-height: 9px; text-align: center; }
```
